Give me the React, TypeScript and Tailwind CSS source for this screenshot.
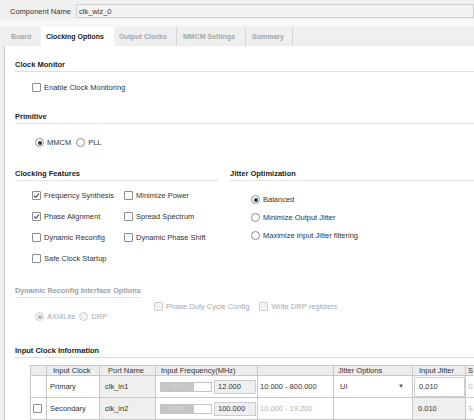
import React from 'react';

const Check = ({ checked = false, disabled = false }: { checked?: boolean; disabled?: boolean }) => (
  <span
    className={`w-[9px] h-[9px] shrink-0 rounded-[1px] border flex items-center justify-center ${
      disabled ? 'border-[#cfcfcf] bg-[#f3f3f3]' : 'border-[#8e8e8e] bg-white'
    }`}
  >
    {checked && (
      <svg width="7" height="7" viewBox="0 0 7 7">
        <path d="M1 3.6 L2.8 5.3 L6 1.5" fill="none" stroke="#333" strokeWidth="1.1" />
      </svg>
    )}
  </span>
);

const Radio = ({ checked = false, disabled = false }: { checked?: boolean; disabled?: boolean }) => (
  <span
    className={`w-[9px] h-[9px] shrink-0 rounded-full border flex items-center justify-center ${
      disabled ? 'border-[#cfcfcf] bg-[#f3f3f3]' : 'border-[#8e8e8e] bg-white'
    }`}
  >
    {checked && <span className={`w-[4px] h-[4px] rounded-full ${disabled ? 'bg-[#b5b5b5]' : 'bg-[#333]'}`}></span>}
  </span>
);

const Heading = ({ children, className = '' }: { children: React.ReactNode; className?: string }) => (
  <div className={`font-bold text-[#222] leading-[9px] pb-[2px] border-b border-[#dedede] ${className}`}>{children}</div>
);

const Opt = ({ children, gray = false }: { children: React.ReactNode; gray?: boolean }) => (
  <span className={`ml-[3px] ${gray ? 'text-[#a8a8a8]' : 'text-[#333]'}`}>{children}</span>
);

export default function App() {
  const tabs = [
    { label: 'Board', w: 'w-[33px] pl-[3px]', active: false },
    { label: 'Clocking Options', w: 'w-[73px] pl-[5px]', active: true },
    { label: 'Output Clocks', w: 'w-[62px] pl-[5px]', active: false },
    { label: 'MMCM Settings', w: 'w-[69px] pl-[6px] border-l border-[#d4d4d4]', active: false },
    { label: 'Summary', w: 'w-[48px] pl-[6px] border-l border-r border-[#d4d4d4]', active: false },
  ];

  return (
    <div
      className="w-[474px] h-[420px] overflow-hidden bg-[#f0f0f0] text-[7.5px] leading-[9px] text-[#333] flex flex-col"
      style={{ fontFamily: '"Liberation Sans", Arial, sans-serif' }}
    >
      {/* Component name */}
      <div className="flex items-center pt-[4px] h-[19px]">
        <span className="pl-[10px] w-[76px] text-[#333]">Component Name</span>
        <div className="flex-1 h-[14px] border border-[#cfcfcf] bg-[#f2f2f2] flex items-center pl-[2px]">clk_wiz_0</div>
      </div>
      <div className="h-[9px] bg-[#f7f7f7]"></div>

      {/* Tabs */}
      <div className="flex h-[19px] pl-[8px] bg-[#efefef] font-bold text-[7px]">
        {tabs.map(t => (
          <div
            key={t.label}
            className={`${t.w} flex items-center ${t.active ? 'bg-white text-[#222]' : 'text-[#a6a6a6]'}`}
          >
            {t.label}
          </div>
        ))}
      </div>

      {/* Content */}
      <div className="flex-1 ml-[4px] bg-white border-l border-[#c8c8c8] pl-[10px] pt-[14px]">
        <Heading>Clock Monitor</Heading>
        <div className="flex items-center h-[9px] mt-[11px] ml-[17px]">
          <Check />
          <Opt>Enable Clock Monitoring</Opt>
        </div>

        <Heading className="mt-[20px]">Primitive</Heading>
        <div className="flex items-center h-[9px] mt-[14px] ml-[20px]">
          <Radio checked />
          <Opt>MMCM</Opt>
          <span className="ml-[5px] flex items-center">
            <Radio />
            <Opt>PLL</Opt>
          </span>
        </div>

        <div className="flex mt-[22px]">
          <div className="w-[203px]">
            <Heading>Clocking Features</Heading>
            <div className="grid grid-cols-[92px_1fr] mt-[4px] ml-[17px]">
              {[
                ['Frequency Synthesis', true, 'Minimize Power', false],
                ['Phase Alignment', true, 'Spread Spectrum', false],
                ['Dynamic Reconfig', false, 'Dynamic Phase Shift', false],
                ['Safe Clock Startup', false, '', false],
              ].map(([a, ac, b, bc]) => (
                <React.Fragment key={a as string}>
                  <div className="h-[21px] flex items-center">
                    <Check checked={ac as boolean} />
                    <Opt>{a}</Opt>
                  </div>
                  <div className="h-[21px] flex items-center">
                    {b && (
                      <>
                        <Check checked={bc as boolean} />
                        <Opt>{b}</Opt>
                      </>
                    )}
                  </div>
                </React.Fragment>
              ))}
            </div>
          </div>
          <div className="flex-1 ml-[12px]">
            <Heading>Jitter Optimization</Heading>
            <div className="mt-[10px] ml-[21px] flex flex-col">
              {['Balanced', 'Minimize Output Jitter', 'Maximize Input Jitter filtering'].map((j, i) => (
                <div key={j} className="h-[17.6px] flex items-center">
                  <Radio checked={i === 0} />
                  <Opt>{j}</Opt>
                </div>
              ))}
            </div>
          </div>
        </div>

        <div className="mt-[17px] inline-block font-bold text-[#a0a0a0] leading-[9px] pb-[2px] border-b border-[#e2e2e2] text-[7.3px]">
          Dynamic Reconfig Interface Options
        </div>
        <div className="flex items-center h-[9px] mt-[4px] ml-[139px]">
          <Check disabled />
          <Opt gray>Phase Duty Cycle Config</Opt>
          <span className="ml-[10px] flex items-center">
            <Check disabled />
            <Opt gray>Write DRP registers</Opt>
          </span>
        </div>
        <div className="flex items-center h-[9px] mt-[1px] ml-[20px]">
          <Radio checked disabled />
          <Opt gray>AXI4Lite</Opt>
          <span className="ml-[4px] flex items-center">
            <Radio disabled />
            <Opt gray>DRP</Opt>
          </span>
        </div>

        <Heading className="mt-[25px] pb-[1px]">Input Clock Information</Heading>

        {/* Table */}
        <div className="mt-[7px] ml-[15px] border-l border-t border-[#c8c8c8] w-[500px]">
          <div className="flex h-[10px] bg-[#ededed] text-[#333]">
            <div className="w-[16px] border-r border-b border-[#c8c8c8]"></div>
            <div className="w-[53px] border-r border-b border-[#c8c8c8] pl-[6px] flex items-center">Input Clock</div>
            <div className="w-[56px] border-r border-b border-[#c8c8c8] pl-[8px] flex items-center">Port Name</div>
            <div className="w-[102px] border-r border-b border-[#c8c8c8] pl-[5px] flex items-center">Input Frequency(MHz)</div>
            <div className="w-[76px] border-r border-b border-[#c8c8c8]"></div>
            <div className="w-[79px] border-r border-b border-[#c8c8c8] pl-[4px] flex items-center">Jitter Options</div>
            <div className="w-[53px] border-r border-b border-[#c8c8c8] pl-[6px] flex items-center">Input Jitter</div>
            <div className="flex-1 border-b border-[#c8c8c8] pl-[2px] flex items-center">S</div>
          </div>
          {[
            { sel: false, name: 'Primary', port: 'clk_in1', val: '12.000', range: '10.000 - 800.000', first: true },
            { sel: true, name: 'Secondary', port: 'clk_in2', val: '100.000', range: '10.000 - 19.200', first: false },
          ].map(r => (
            <div key={r.name} className="flex h-[22px]">
              <div className="w-[16px] border-r border-b border-[#c8c8c8] flex items-center pl-[2px]">
                {r.sel && <Check />}
              </div>
              <div className="w-[53px] border-r border-b border-[#c8c8c8] pl-[3px] flex items-center">{r.name}</div>
              <div className="w-[56px] border-r border-b border-[#c8c8c8] bg-[#efefef] pl-[5px] flex items-center">{r.port}</div>
              <div className="w-[102px] border-r border-b border-[#c8c8c8] pl-[4px] flex items-center">
                <div className="w-[52px] h-[10px] border border-[#c4c4c4] bg-white flex">
                  <div className="w-[33px] h-full bg-[#c6c6c6] flex items-center justify-center text-[#d6d6d6] text-[6px]">XXX</div>
                </div>
                <div className="ml-[2px] w-[42px] h-[14px] border border-[#cdcdcd] bg-[#efefef] flex items-center pl-[3px]">{r.val}</div>
              </div>
              <div className={`w-[76px] border-r border-b border-[#c8c8c8] pl-[2px] flex items-center ${r.first ? 'text-[#333]' : 'text-[#b0b0b0]'}`}>
                {r.range}
              </div>
              <div className="w-[79px] border-r border-b border-[#c8c8c8] pl-[6px] pr-[8px] flex items-center justify-between">
                {r.first && (
                  <>
                    <span>UI</span>
                    <span className="text-[6px] text-[#555]">▼</span>
                  </>
                )}
              </div>
              <div className={`w-[53px] border-r border-b border-[#c8c8c8] flex items-center ${r.first ? 'bg-white' : 'bg-[#efefef]'}`}>
                {r.first ? (
                  <div className="w-[51px] h-[20px] border border-[#d0d0d0] ml-[1px] flex items-center pl-[4px]">0.010</div>
                ) : (
                  <span className="pl-[5px]">0.010</span>
                )}
              </div>
              <div className="flex-1 border-b border-[#c8c8c8] pl-[2px] flex items-center text-[#c0c0c0]">S</div>
            </div>
          ))}
        </div>
      </div>
    </div>
  );
}
